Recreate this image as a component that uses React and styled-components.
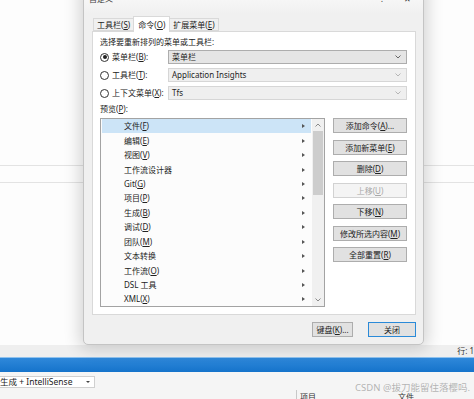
import React from "react";
import styled, { createGlobalStyle } from "styled-components";

const GlobalStyle = createGlobalStyle`
  html, body {
    margin: 0;
    padding: 0;
    background: #fff;
  }
  body {
    font-family: "Noto Sans", "Noto Sans CJK SC", sans-serif;
    color: #1e1e1e;
  }
`;

const menus = [
  "文件(&F)",
  "编辑(&E)",
  "视图(&V)",
  "工作流设计器",
  "Git(&G)",
  "项目(&P)",
  "生成(&B)",
  "调试(&D)",
  "团队(&M)",
  "文本转换",
  "工作流(&O)",
  "DSL 工具",
  "XML(&X)",
];

const sideButtons = [
  { label: "添加命令(&A)..." },
  { label: "添加新菜单(&E)" },
  { label: "删除(&D)" },
  { label: "上移(&U)", disabled: true },
  { label: "下移(&N)" },
  { label: "修改所选内容(&M)" },
  { label: "全部重置(&R)" },
];

const targets = [
  { label: "菜单栏(&B):", value: "菜单栏", checked: true },
  { label: "工具栏(&T):", value: "Application Insights" },
  { label: "上下文菜单(&X):", value: "Tfs" },
];

// "文件(&F)" -> 文件(<u>F</u>)
const Mnemonic = ({ text }) => {
  const i = text.indexOf("&");
  if (i < 0) return <>{text}</>;
  return (
    <>
      {text.slice(0, i)}
      <u>{text[i + 1]}</u>
      {text.slice(i + 2)}
    </>
  );
};

const Chevron = ({ up, color = "#8a8a8a" }) => (
  <svg width="6" height="4" viewBox="0 0 6 4">
    <path
      d={up ? "M0.5 3.5 L3 1 L5.5 3.5" : "M0.5 0.5 L3 3 L5.5 0.5"}
      fill="none"
      stroke={color}
      strokeWidth="1"
    />
  </svg>
);

const App = () => {
  return (
    <>
      <GlobalStyle />
      <Page>
        <Editor>
          <GridRow />
        </Editor>
        <StatusLine>行: 1</StatusLine>
        <BlueBar />
        <BottomPanel>
          <ConfigSelect>
            生成 + IntelliSense
            <SelectArrow />
          </ConfigSelect>
          <HeaderRow>
            <span />
            <HeaderCell>项目</HeaderCell>
            <HeaderCell $plain>文件</HeaderCell>
          </HeaderRow>
        </BottomPanel>
        <Watermark>CSDN @拔刀能留住落樱吗.</Watermark>

        <Dialog>
          <TitleBar>
            <Title>自定义</Title>
            <TitleButtons>
              <span>?</span>
              <span>✕</span>
            </TitleButtons>
          </TitleBar>

          <TabStrip>
            <Tab>
              <Mnemonic text="工具栏(&S)" />
            </Tab>
            <Tab $active>
              <Mnemonic text="命令(&O)" />
            </Tab>
            <Tab>
              <Mnemonic text="扩展菜单(&E)" />
            </Tab>
          </TabStrip>

          <TabPage>
            <Heading>选择要重新排列的菜单或工具栏:</Heading>
            <Targets>
              {targets.map((t) => (
                <TargetRow key={t.value}>
                  <RadioLabel>
                    <Radio $checked={t.checked} />
                    <Mnemonic text={t.label} />
                  </RadioLabel>
                  <Combo $enabled={t.checked}>
                    {t.value}
                    <Chevron color={t.checked ? "#666" : "#b5b5b5"} />
                  </Combo>
                </TargetRow>
              ))}
            </Targets>

            <Heading $gap>
              <Mnemonic text="预览(&P):" />
            </Heading>

            <PreviewArea>
              <ListBox>
                <Rows>
                  {menus.map((m, i) => (
                    <MenuRow key={m} $selected={i === 0}>
                      <span>
                        <Mnemonic text={m} />
                      </span>
                      <SubArrow />
                    </MenuRow>
                  ))}
                </Rows>
                <ScrollBar>
                  <ScrollButton>
                    <Chevron up />
                  </ScrollButton>
                  <Thumb />
                  <ScrollButton $bottom>
                    <Chevron />
                  </ScrollButton>
                </ScrollBar>
              </ListBox>

              <SideButtons>
                {sideButtons.map((b) => (
                  <Button key={b.label} disabled={b.disabled}>
                    <Mnemonic text={b.label} />
                  </Button>
                ))}
              </SideButtons>
            </PreviewArea>
          </TabPage>

          <Footer>
            <Button $w={41}>
              <Mnemonic text="键盘(&K)..." />
            </Button>
            <Button $w={48} $default>
              关闭
            </Button>
          </Footer>
        </Dialog>
      </Page>
    </>
  );
};

export default App;

// Styled Components
const Page = styled.div`
  position: relative;
  width: 474px;
  height: 399px;
  overflow: hidden;
  display: flex;
  flex-direction: column;
  background: #fdfdfd;
`;

const Editor = styled.div`
  height: 345px;
  flex: none;
  box-sizing: border-box;
  padding-top: 165px;
  background: #fdfdfd;
`;

const GridRow = styled.div`
  height: 16px;
  border-top: 1px solid #e3e3e3;
  border-bottom: 1px solid #e3e3e3;
`;

const StatusLine = styled.div`
  height: 12px;
  flex: none;
  display: flex;
  justify-content: flex-end;
  align-items: center;
  background: #efefef;
  font-size: 8px;
  line-height: 12px;
  color: #333;
  white-space: nowrap;
`;

const BlueBar = styled.div`
  height: 15px;
  flex: none;
  box-sizing: border-box;
  background: linear-gradient(#2f88da, #1573cb);
  border-top: 1px solid #8fc2ee;
`;

const BottomPanel = styled.div`
  flex: 1;
  background: #f5f5f5;
  padding-top: 4px;
`;

const ConfigSelect = styled.div`
  width: 95px;
  height: 12px;
  box-sizing: border-box;
  display: flex;
  align-items: center;
  justify-content: space-between;
  padding: 0 4px 0 0;
  background: #fff;
  border: 1px solid #d0d0d0;
  border-left: none;
  font-size: 8.5px;
  line-height: 10px;
  color: #222;
  white-space: nowrap;
`;

const SelectArrow = styled.span`
  width: 0;
  height: 0;
  border-left: 2px solid transparent;
  border-right: 2px solid transparent;
  border-top: 2px solid #444;
`;

const HeaderRow = styled.div`
  display: grid;
  grid-template-columns: 296px 100px 1fr;
  margin-top: 2px;
  height: 11px;
`;

const HeaderCell = styled.div`
  border-left: ${(p) => (p.$plain ? "none" : "1px solid #c8c8c8")};
  padding-left: ${(p) => (p.$plain ? "2px" : "3px")};
  font-size: 8px;
  line-height: 14px;
  color: #333;
`;

const Watermark = styled.div`
  position: absolute;
  right: 4px;
  bottom: 5px;
  font-size: 9.5px;
  line-height: 12px;
  color: rgba(150, 150, 150, 0.7);
  white-space: nowrap;
`;

const Dialog = styled.div`
  position: absolute;
  left: 83px;
  top: -10px;
  width: 341px;
  height: 355px;
  box-sizing: border-box;
  display: flex;
  flex-direction: column;
  padding: 0 7px 0 8px;
  background: #f0f0f0;
  border: 1px solid #c4c4c4;
  border-radius: 0 0 5px 5px;
  box-shadow: 0 0 16px 4px rgba(0, 0, 0, 0.16);
  font-size: 8px;
  line-height: 14px;
  color: #222;
`;

const TitleBar = styled.div`
  height: 23px;
  flex: none;
  box-sizing: border-box;
  display: flex;
  justify-content: space-between;
  align-items: flex-start;
  margin: 0 -7px 0 -8px;
  padding: 2px 12px 0 5px;
  background: linear-gradient(#fafafa, #f0f0f0);
`;

const Title = styled.span`
  font-size: 8px;
  line-height: 12px;
  color: #444;
`;

const TitleButtons = styled.span`
  display: flex;
  gap: 20px;
  font-size: 8px;
  line-height: 12px;
  color: #333;
`;

const TabStrip = styled.div`
  height: 17px;
  flex: none;
  display: flex;
  align-items: flex-end;
  padding-left: 1px;
  position: relative;
  z-index: 1;
`;

const Tab = styled.div`
  height: ${(p) => (p.$active ? "16px" : "13px")};
  box-sizing: border-box;
  padding: ${(p) => (p.$active ? "0 4px" : "0 3px")};
  margin-bottom: ${(p) => (p.$active ? "-1px" : "0")};
  display: flex;
  align-items: center;
  background: ${(p) => (p.$active ? "#fff" : "#f0f0f0")};
  border: 1px solid #d9d9d9;
  border-bottom: ${(p) => (p.$active ? "none" : "1px solid #d9d9d9")};
  margin-left: -1px;
  white-space: nowrap;

  &:first-child {
    margin-left: 0;
  }
`;

const TabPage = styled.div`
  height: 284px;
  flex: none;
  box-sizing: border-box;
  padding: 3px 8px 0 7px;
  background: #fff;
  border: 1px solid #d9d9d9;
`;

const Heading = styled.div`
  height: 14px;
  margin-top: ${(p) => (p.$gap ? "2px" : "0")};
  white-space: nowrap;
`;

const Targets = styled.div`
  display: flex;
  flex-direction: column;
  gap: 4px;
  margin-top: 1px;
`;

const TargetRow = styled.div`
  display: grid;
  grid-template-columns: 68px 1fr;
  height: 14px;
  align-items: center;
`;

const RadioLabel = styled.div`
  display: flex;
  align-items: center;
  white-space: nowrap;
`;

const Radio = styled.span`
  position: relative;
  width: 9px;
  height: 9px;
  box-sizing: border-box;
  margin: 0 3px 0 0;
  border: 1px solid #333;
  border-radius: 50%;
  background: #fff;

  &::after {
    content: "";
    display: ${(p) => (p.$checked ? "block" : "none")};
    position: absolute;
    left: 1.5px;
    top: 1.5px;
    width: 4px;
    height: 4px;
    border-radius: 50%;
    background: #222;
  }
`;

const Combo = styled.div`
  height: 14px;
  box-sizing: border-box;
  display: flex;
  align-items: center;
  justify-content: space-between;
  padding: 0 5px 0 3px;
  background: ${(p) => (p.$enabled ? "#e5e5e5" : "#efefef")};
  border: 1px solid ${(p) => (p.$enabled ? "#adadad" : "#d6d6d6")};
  color: #1e1e1e;
  white-space: nowrap;
`;

const PreviewArea = styled.div`
  display: flex;
  gap: 8px;
  margin-top: 2px;
`;

const ListBox = styled.div`
  width: 225px;
  height: 189px;
  flex: none;
  box-sizing: border-box;
  display: flex;
  border: 1px solid #a3a3a3;
  background: #fcfcfc;
`;

const Rows = styled.div`
  flex: 1;
  padding: 0 1px 0 1px;
`;

const MenuRow = styled.div`
  height: 14.45px;
  display: flex;
  align-items: center;
  justify-content: space-between;
  padding: 0 6px 0 22px;
  background: ${(p) => (p.$selected ? "#cce4f7" : "transparent")};
  white-space: nowrap;
`;

const SubArrow = styled.span`
  width: 0;
  height: 0;
  border-left: 3px solid #555;
  border-top: 2.5px solid transparent;
  border-bottom: 2.5px solid transparent;
`;

const ScrollBar = styled.div`
  width: 12px;
  flex: none;
  display: flex;
  flex-direction: column;
  align-items: center;
  background: #f0f0f0;
`;

const ScrollButton = styled.div`
  height: 12px;
  width: 12px;
  display: flex;
  align-items: center;
  justify-content: center;
  margin-top: ${(p) => (p.$bottom ? "auto" : "0")};
`;

const Thumb = styled.div`
  width: 10px;
  height: 64px;
  background: #cdcdcd;
`;

const SideButtons = styled.div`
  width: 75px;
  display: flex;
  flex-direction: column;
  gap: 6.5px;
`;

const Button = styled.button`
  width: ${(p) => (p.$w ? `${p.$w}px` : "100%")};
  height: 15px;
  box-sizing: border-box;
  padding: 0;
  display: flex;
  align-items: center;
  justify-content: center;
  font-family: inherit;
  font-size: 8px;
  line-height: 13px;
  color: #222;
  background: #e1e1e1;
  border: 1px solid ${(p) => (p.$default ? "#2a8ad8" : "#adadad")};
  border-radius: 0;
  white-space: nowrap;

  &:disabled {
    color: #a8a8a8;
    background: #f4f4f4;
    border-color: #d2d2d2;
  }
`;

const Footer = styled.div`
  display: flex;
  justify-content: flex-end;
  gap: 15px;
  margin-top: 7px;
`;
